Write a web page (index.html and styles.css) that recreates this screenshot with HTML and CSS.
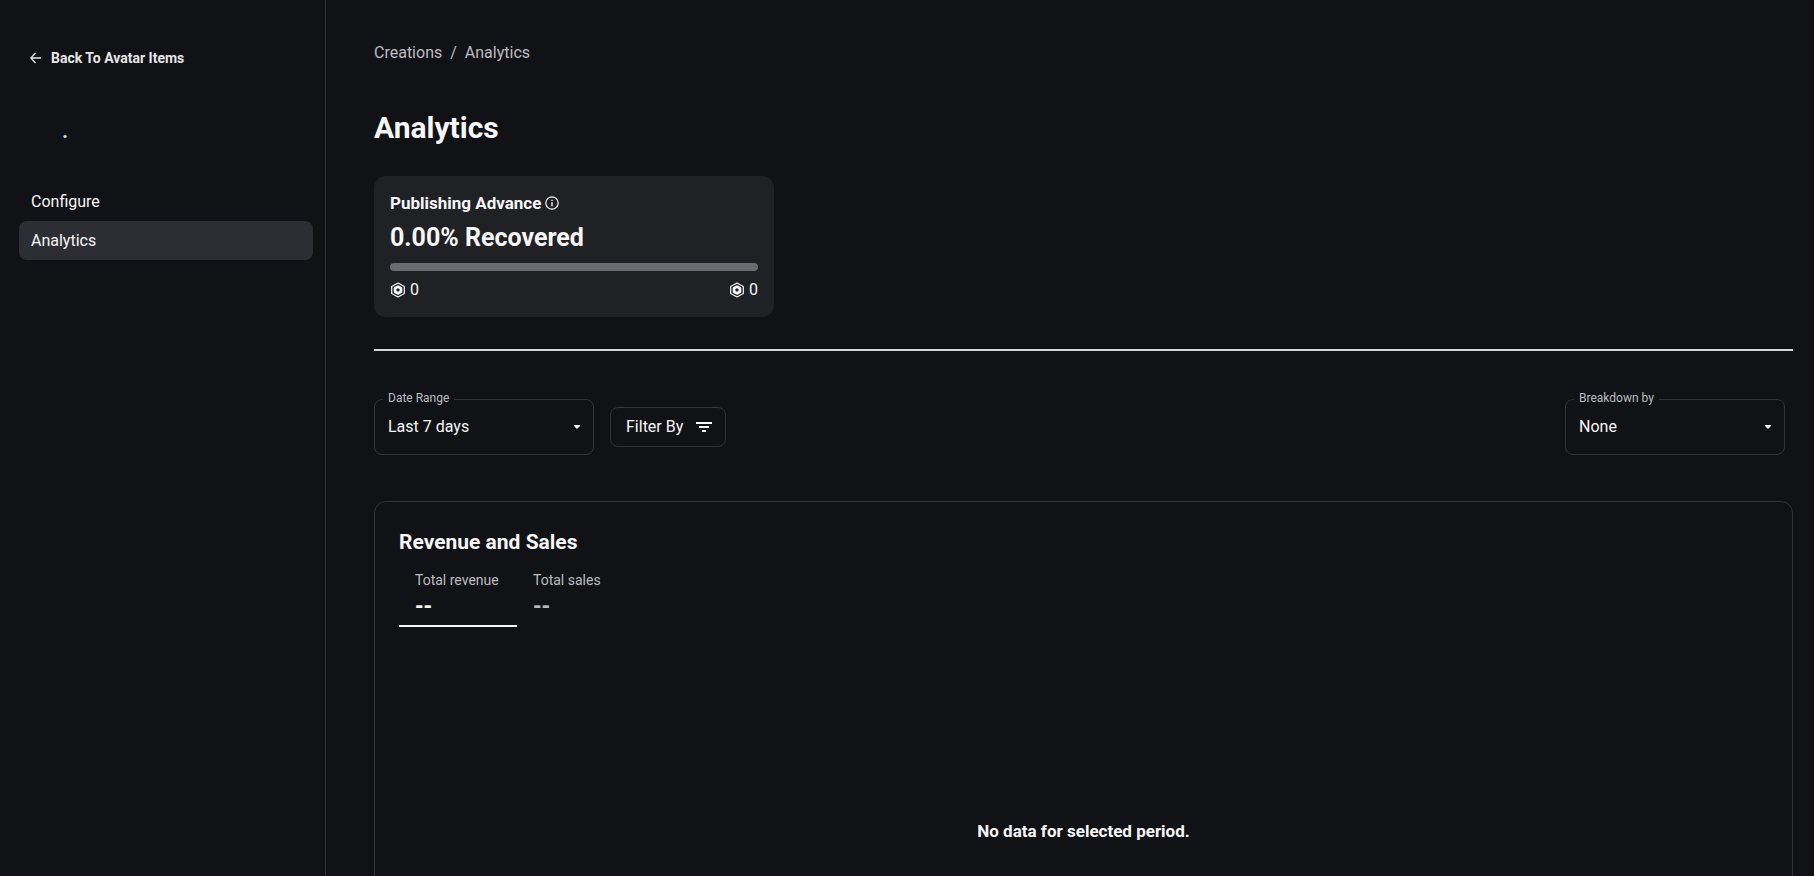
FILE: index.html
```
<!DOCTYPE html>
<html lang="en">
<head>
    <meta charset="UTF-8">
    <meta name="viewport" content="width=device-width, initial-scale=1.0">
    <title>Analytics</title>
    <link rel="stylesheet" href="styles.css">
</head>
<body>
    <div class="layout">
        <aside class="sidebar">
            <a class="back-link" href="#">
                <svg width="12" height="12" viewBox="0 0 12 12" fill="none" stroke="currentColor" stroke-width="1.3">
                    <path d="M11 6H1M5.5 1L.8 6l4.7 5"/>
                </svg>
                Back To Avatar Items
            </a>
            <div class="item-name">.</div>
            <nav class="side-nav">
                <a href="#">Configure</a>
                <a class="active" href="#">Analytics</a>
            </nav>
        </aside>

        <main class="content">
            <nav class="breadcrumb">
                <a href="#">Creations</a>
                <span>/</span>
                <a href="#">Analytics</a>
            </nav>

            <h1>Analytics</h1>

            <section class="advance-card">
                <h2>
                    Publishing Advance
                    <svg width="14" height="14" viewBox="0 0 14 14" fill="none" stroke="currentColor" stroke-width="1.2">
                        <circle cx="7" cy="7" r="6.2"/>
                        <path d="M7 6.2v4M7 3.7v1.4" stroke-width="1.4"/>
                    </svg>
                </h2>
                <p class="recovered">0.00% Recovered</p>
                <div class="progress"></div>
                <div class="amounts">
                    <span class="amount">
                        <svg width="16" height="16" viewBox="0 0 16 16" fill="none" stroke="currentColor">
                            <path d="M8 1l6.3 3.6v6.8L8 15l-6.3-3.6V4.6z" stroke-width="1.2" stroke-linejoin="round"/>
                            <path d="M8 4.6l2.9 1.7v3.4L8 11.4 5.1 9.7V6.3z" stroke-width="2.8" stroke-linejoin="round"/>
                        </svg>
                        0
                    </span>
                    <span class="amount">
                        <svg width="16" height="16" viewBox="0 0 16 16" fill="none" stroke="currentColor">
                            <path d="M8 1l6.3 3.6v6.8L8 15l-6.3-3.6V4.6z" stroke-width="1.2" stroke-linejoin="round"/>
                            <path d="M8 4.6l2.9 1.7v3.4L8 11.4 5.1 9.7V6.3z" stroke-width="2.8" stroke-linejoin="round"/>
                        </svg>
                        0
                    </span>
                </div>
            </section>

            <hr>

            <div class="filters">
                <div class="field">
                    <label for="date-range">Date Range</label>
                    <select id="date-range">
                        <option>Last 7 days</option>
                        <option>Last 28 days</option>
                    </select>
                    <svg class="caret" width="8" height="4" viewBox="0 0 8 4" fill="currentColor"><path d="M1 0h6v1L4 4 1 1z"/></svg>
                </div>
                <button class="filter-btn" type="button">
                    Filter By
                    <svg width="16" height="10" viewBox="0 0 16 10" fill="currentColor">
                        <path d="M0 0h16v2H0zM3 4h10v2H3zM6 8h4v2H6z"/>
                    </svg>
                </button>
                <div class="field breakdown">
                    <label for="breakdown">Breakdown by</label>
                    <select id="breakdown">
                        <option>None</option>
                        <option>Item</option>
                    </select>
                    <svg class="caret" width="8" height="4" viewBox="0 0 8 4" fill="currentColor"><path d="M1 0h6v1L4 4 1 1z"/></svg>
                </div>
            </div>

            <section class="panel">
                <h2>Revenue and Sales</h2>
                <div class="tabs">
                    <button class="tab active" type="button">
                        <span>Total revenue</span>
                        <strong>--</strong>
                    </button>
                    <button class="tab" type="button">
                        <span>Total sales</span>
                        <strong>--</strong>
                    </button>
                </div>
                <div class="empty-chart">No data for selected period.</div>
            </section>
        </main>
    </div>
</body>
</html>
```
FILE: styles.css
```
* {
    box-sizing: border-box;
}

body {
    margin: 0;
    background: #111216;
    color: #f7f7f8;
    font-family: Roboto, "Liberation Sans", sans-serif;
    font-size: 16px;
    line-height: 24px;
}

a {
    color: inherit;
    text-decoration: none;
}

h1, h2, p {
    margin: 0;
}

button, select {
    font: inherit;
    color: inherit;
    cursor: pointer;
}

.layout {
    display: flex;
    height: 100vh;
}

/* Sidebar */
.sidebar {
    flex: 0 0 326px;
    padding: 46px 12px 0 19px;
    border-right: 1px solid #34353a;
}

.back-link {
    display: flex;
    align-items: center;
    gap: 9px;
    padding-left: 11px;
    font-size: 14px;
    font-weight: 700;
    color: #e6e6e8;
}

.item-name {
    padding: 49px 0 0 43px;
    font-size: 21px;
    font-weight: 700;
    color: #d5d7dd;
}

.side-nav {
    display: flex;
    flex-direction: column;
    margin-top: 39px;
}

.side-nav a {
    padding: 8px 12px 7px;
    border-radius: 8px;
}

.side-nav .active {
    background: #2d2e33;
}

/* Main column */
.content {
    flex: 1;
    min-width: 0;
    padding: 41px 21px 40px 48px;
    overflow-y: auto;
    scrollbar-width: none;
}

.breadcrumb {
    display: flex;
    gap: 8px;
    color: #bcbdc0;
}

h1 {
    margin-top: 43px;
    font-size: 30px;
    line-height: 40px;
}

.advance-card {
    max-width: 400px;
    margin-top: 28px;
    padding: 16px;
    border-radius: 12px;
    background: #202125;
}

.advance-card h2 {
    display: flex;
    align-items: center;
    gap: 4px;
    font-size: 17px;
    line-height: 22px;
}

.recovered {
    margin-top: 8px;
    font-size: 25px;
    font-weight: 700;
    line-height: 32px;
}

.progress {
    height: 8px;
    margin-top: 9px;
    border-radius: 4px;
    background: #6a6b70;
}

.amounts {
    display: flex;
    justify-content: space-between;
    margin-top: 8px;
    line-height: 22px;
}

.amount {
    display: flex;
    align-items: center;
    gap: 4px;
}

hr {
    height: 2px;
    margin: 32px 0 48px;
    border: 0;
    background: #d5d7dd;
}

.filters {
    display: flex;
    align-items: center;
    gap: 16px;
    padding-right: 8px;
}

.field {
    position: relative;
    width: 220px;
}

/* Label sits over the top border of the select */
.field label {
    position: absolute;
    top: -9px;
    left: 9px;
    padding: 0 5px;
    background: #111216;
    color: #bcbdc0;
    font-size: 12px;
    line-height: 16px;
}

.field select {
    display: block;
    width: 100%;
    height: 56px;
    padding: 0 32px 0 13px;
    border: 1px solid #34353a;
    border-radius: 8px;
    background: transparent;
    appearance: none;
}

.field .caret {
    position: absolute;
    top: 26px;
    right: 13px;
    pointer-events: none;
}

.breakdown {
    margin-left: auto;
}

.filter-btn {
    display: flex;
    align-items: center;
    justify-content: space-between;
    min-width: 116px;
    height: 40px;
    padding: 0 13px 0 15px;
    border: 1px solid #34353a;
    border-radius: 8px;
    background: none;
}

.panel {
    margin-top: 46px;
    padding: 24px;
    border: 1px solid #34353a;
    border-radius: 12px;
}

.panel h2 {
    font-size: 21px;
    line-height: 32px;
}

.tabs {
    display: flex;
    margin-top: 6px;
}

.tab {
    display: flex;
    flex-direction: column;
    min-width: 118px;
    padding: 4px 16px 5px;
    border: 0;
    border-bottom: 2px solid transparent;
    background: none;
    color: #bcbdc0;
    font-size: 14px;
    text-align: left;
}

.tab span {
    line-height: 24px;
}

.tab strong {
    font-family: Inter, sans-serif;
    font-size: 18px;
    font-weight: 900;
    line-height: 28px;
}

.tab.active {
    border-bottom-color: #f7f7f8;
}

.tab.active strong {
    color: #f7f7f8;
}

.empty-chart {
    display: flex;
    align-items: center;
    justify-content: center;
    height: 408px;
    font-size: 17px;
    font-weight: 700;
}
```
